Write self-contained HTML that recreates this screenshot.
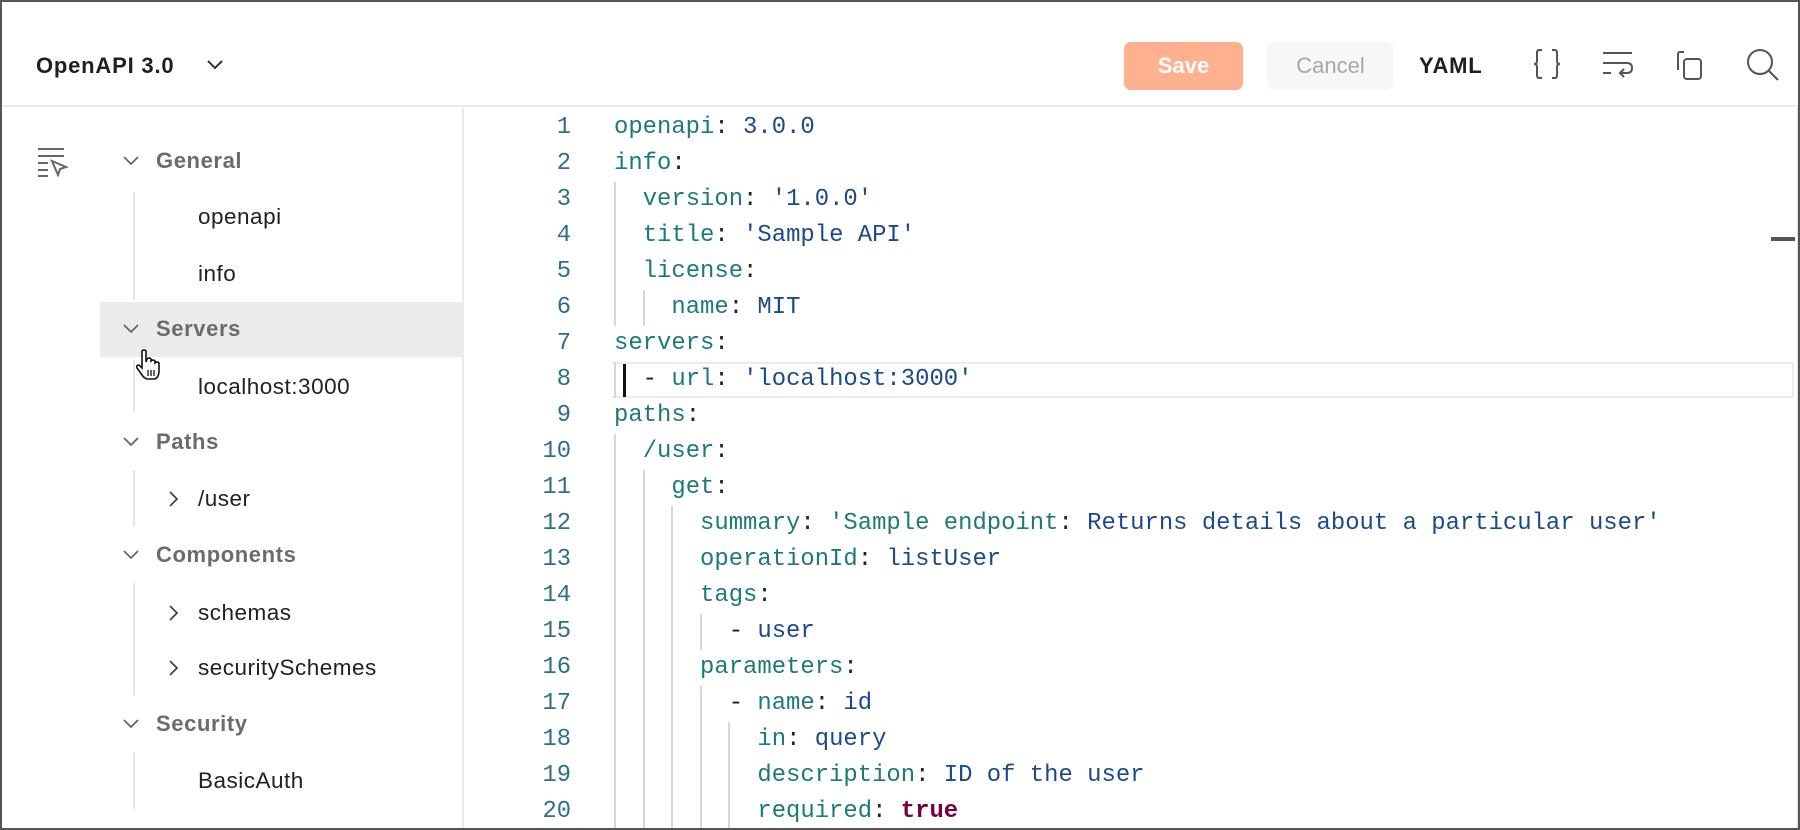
<!DOCTYPE html>
<html><head><meta charset="utf-8"><style>
*{margin:0;padding:0;box-sizing:border-box}
body{width:1800px;height:830px;overflow:hidden;background:#fff;font-family:"Liberation Sans",sans-serif;position:relative}
.frame{position:absolute;left:0;top:0;width:1800px;height:830px;border:2px solid #555;pointer-events:none;z-index:10}
.hdr{position:absolute;left:0;top:0;width:1800px;height:107px;border-bottom:2px solid #ebebeb}
.abs{position:absolute}
.tree-h{position:absolute;left:156px;font-size:22px;letter-spacing:0.6px;font-weight:bold;color:#6b6b6b;transform:translateY(-50%)}
.tree-c{position:absolute;left:198px;font-size:22.5px;letter-spacing:0.5px;color:#212121;transform:translateY(-50%)}
.chev{position:absolute;transform:translate(-50%,-50%)}
.vl{position:absolute;left:133px;width:2px;background:#e6e6e6}
.code{position:absolute;left:614px;font-family:"Liberation Mono",monospace;font-size:23.9px;line-height:36px;white-space:pre;color:#222}
.ln{position:absolute;right:1229px;font-family:"Liberation Mono",monospace;font-size:23.8px;line-height:36px;color:#2e6f86;text-align:right}
.k{color:#1d7a78}.v{color:#1b4a8c}.b{color:#770044;font-weight:bold}
.g{position:absolute;width:2px;background:#d6d6d6}
</style></head><body>
<div class="hdr">
 <div class="abs" style="left:36px;top:53px;font-size:22px;letter-spacing:0.8px;font-weight:bold;color:#1f1f1f">OpenAPI 3.0</div>
 <svg class="abs" style="left:206px;top:59px" width="18" height="12"><path d="M2 2 L9 9 L16 2" fill="none" stroke="#333" stroke-width="2"/></svg>
 <div class="abs" style="left:1124px;top:42px;width:119px;height:48px;background:#ffb08f;border-radius:7px;color:#fff;font-weight:bold;font-size:22px;text-align:center;line-height:48px">Save</div>
 <div class="abs" style="left:1267px;top:42px;width:127px;height:48px;background:#f7f7f7;border-radius:7px;color:#a6a6a6;font-size:22px;text-align:center;line-height:48px">Cancel</div>
 <div class="abs" style="left:1419px;top:53px;font-size:22px;letter-spacing:0.8px;font-weight:bold;color:#1f1f1f">YAML</div>
 <svg class="abs" style="left:1530px;top:46px" width="34" height="36" fill="none" stroke="#555" stroke-width="2"><path d="M12 4 H9 Q7 4 7 7 V15 Q7 18 4 18 Q7 18 7 21 V29 Q7 32 9 32 H12"/><path d="M22 4 H25 Q27 4 27 7 V15 Q27 18 30 18 Q27 18 27 21 V29 Q27 32 25 32 H22"/></svg>
 <svg class="abs" style="left:1600px;top:48px" width="36" height="34" fill="none" stroke="#555" stroke-width="2"><path d="M3 5 H32"/><path d="M3 15 H27 Q32 15 32 20 Q32 25 27 25 H20"/><path d="M24 21 L20 25 L24 29"/><path d="M3 25 H11"/></svg>
 <svg class="abs" style="left:1674px;top:48px" width="32" height="34" fill="none" stroke="#555" stroke-width="2"><path d="M10 4 H6 Q4 4 4 6 V22"/><rect x="10" y="11" width="17" height="20" rx="3"/></svg>
 <svg class="abs" style="left:1744px;top:46px" width="38" height="38" fill="none" stroke="#555" stroke-width="2"><circle cx="16" cy="16" r="12"/><path d="M25 25 L34 34"/></svg>
</div>
<div class="abs" style="left:462px;top:107px;width:2px;height:723px;background:#ebebeb"></div>
<svg class="abs" style="left:38px;top:147px" width="32" height="30" fill="none" stroke="#666" stroke-width="2"><path d="M0 2 H26 M0 9 H26 M0 16 H10 M0 23 H10 M0 29 H10"/><path d="M14 14 L28 20 L22 22 L20 28 Z"/></svg>
<div class="abs" style="left:100px;top:302px;width:362px;height:55px;background:#ebebeb"></div>
<div class="vl" style="top:192px;height:108px"></div>
<div class="vl" style="top:360px;height:52px"></div>
<div class="vl" style="top:470px;height:56px"></div>
<div class="vl" style="top:583px;height:112px"></div>
<div class="vl" style="top:753px;height:56px"></div>
<svg class="chev" style="left:131px;top:161px" width="18" height="12"><path d="M2 2 L9 9 L16 2" fill="none" stroke="#666" stroke-width="1.8"/></svg>
<svg class="chev" style="left:131px;top:329px" width="18" height="12"><path d="M2 2 L9 9 L16 2" fill="none" stroke="#666" stroke-width="1.8"/></svg>
<svg class="chev" style="left:131px;top:442px" width="18" height="12"><path d="M2 2 L9 9 L16 2" fill="none" stroke="#666" stroke-width="1.8"/></svg>
<svg class="chev" style="left:131px;top:555px" width="18" height="12"><path d="M2 2 L9 9 L16 2" fill="none" stroke="#666" stroke-width="1.8"/></svg>
<svg class="chev" style="left:131px;top:724px" width="18" height="12"><path d="M2 2 L9 9 L16 2" fill="none" stroke="#666" stroke-width="1.8"/></svg>
<svg class="chev" style="left:174px;top:499px" width="12" height="18"><path d="M2 2 L9 9 L2 16" fill="none" stroke="#444" stroke-width="1.8"/></svg>
<svg class="chev" style="left:174px;top:613px" width="12" height="18"><path d="M2 2 L9 9 L2 16" fill="none" stroke="#444" stroke-width="1.8"/></svg>
<svg class="chev" style="left:174px;top:668px" width="12" height="18"><path d="M2 2 L9 9 L2 16" fill="none" stroke="#444" stroke-width="1.8"/></svg>
<div class="tree-h" style="top:161px">General</div>
<div class="tree-c" style="top:217px">openapi</div>
<div class="tree-c" style="top:274px">info</div>
<div class="tree-h" style="top:329px">Servers</div>
<div class="tree-c" style="top:387px">localhost:3000</div>
<div class="tree-h" style="top:442px">Paths</div>
<div class="tree-c" style="top:499px">/user</div>
<div class="tree-h" style="top:555px">Components</div>
<div class="tree-c" style="top:613px">schemas</div>
<div class="tree-c" style="top:668px">securitySchemes</div>
<div class="tree-h" style="top:724px">Security</div>
<div class="tree-c" style="top:781px">BasicAuth</div>
<svg class="abs" style="left:134px;top:348px" width="32" height="34"><path d="M8 3 Q10 1 12 3 V14 L13 11 Q15 9 17 11 L17 13 Q19 11 21 13 L21 15 Q23 13 25 15 V23 Q25 29 21 31 H13 Q10 30 8 27 L3 20 Q2 17 5 17 L8 20 Z" fill="#fff" stroke="#111" stroke-width="1.6"/><path d="M14 22 V28 M17 22 V28 M20 22 V28" stroke="#111" stroke-width="1.3"/></svg>
<div class="abs" style="left:612px;top:362px;width:1182px;height:36px;border:2px solid #ececec;border-left:none"></div>
<div class="g" style="left:614px;top:182px;height:144px"></div>
<div class="g" style="left:643px;top:290px;height:36px"></div>
<div class="g" style="left:614px;top:362px;height:36px"></div>
<div class="abs" style="left:623px;top:364px;width:3px;height:33px;background:#111"></div>
<div class="g" style="left:614px;top:434px;height:396px"></div>
<div class="g" style="left:643px;top:470px;height:360px"></div>
<div class="g" style="left:671px;top:506px;height:324px"></div>
<div class="g" style="left:700px;top:614px;height:36px"></div>
<div class="g" style="left:700px;top:686px;height:144px"></div>
<div class="g" style="left:728px;top:722px;height:108px"></div>
<div class="ln" style="top:110px">1<br>2<br>3<br>4<br>5<br>6<br>7<br>8<br>9<br>10<br>11<br>12<br>13<br>14<br>15<br>16<br>17<br>18<br>19<br>20</div>
<div class="code" style="top:110px"><span class="k">openapi</span>: <span class="v">3.0.0</span>
<span class="k">info</span>:
  <span class="k">version</span>: <span class="v">'1.0.0'</span>
  <span class="k">title</span>: <span class="v">'Sample API'</span>
  <span class="k">license</span>:
    <span class="k">name</span>: <span class="v">MIT</span>
<span class="k">servers</span>:
  - <span class="k">url</span>: <span class="v">'localhost:3000'</span>
<span class="k">paths</span>:
  <span class="k">/user</span>:
    <span class="k">get</span>:
      <span class="k">summary</span>: <span class="k">'Sample endpoint</span>: <span class="v">Returns details about a particular user'</span>
      <span class="k">operationId</span>: <span class="v">listUser</span>
      <span class="k">tags</span>:
        - <span class="v">user</span>
      <span class="k">parameters</span>:
        - <span class="k">name</span>: <span class="v">id</span>
          <span class="k">in</span>: <span class="v">query</span>
          <span class="k">description</span>: <span class="v">ID of the user</span>
          <span class="k">required</span>: <span class="b">true</span></div>
<div class="abs" style="left:1797px;top:107px;width:1px;height:723px;background:#e0e0e0"></div>
<div class="abs" style="left:1771px;top:237px;width:24px;height:4px;background:#555"></div>
<div class="frame"></div>
</body></html>
